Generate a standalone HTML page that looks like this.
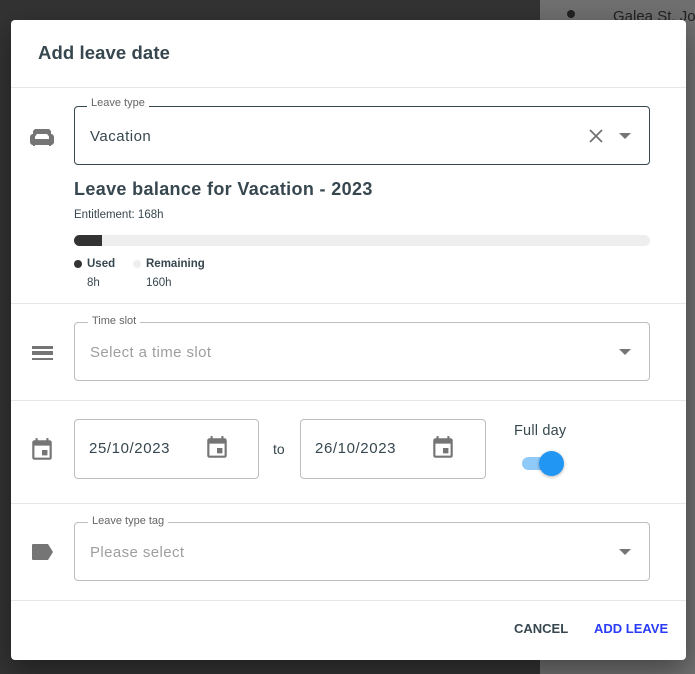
<!DOCTYPE html>
<html><head><style>
*{box-sizing:border-box;margin:0;padding:0}
body{width:695px;height:674px;overflow:hidden;font-family:"Liberation Sans",sans-serif;background:#333;position:relative}
.abs{position:absolute}
.bgr{left:540px;top:0;width:155px;height:674px;background:#707070}
.dlg{left:11px;top:20px;width:675px;height:640px;background:#fff;border-radius:4px;box-shadow:0 10px 30px rgba(0,0,0,.4)}
.hr{left:11px;width:675px;height:1px;background:#e6e6e6}
.fld{border:1px solid #bdbdbd;border-radius:4px;background:#fff}
.lg{font-size:11px;color:#666;background:#fff;padding:0 4px;line-height:12px}
.t{white-space:nowrap}
.ph{font-size:15px;color:#9e9e9e;letter-spacing:.4px}
.arr{width:0;height:0;border-left:6px solid transparent;border-right:6px solid transparent;border-top:6px solid #757575}
</style></head><body>
<div class="abs bgr"></div>
<div class="abs t" style="left:613px;top:8px;font-size:15px;color:#222">Galea St. Jo</div>
<div class="abs" style="left:567px;top:10px;width:8px;height:8px;border-radius:50%;background:#222"></div>
<div class="abs dlg"></div>
<div class="abs t" style="left:38px;top:42px;font-size:18.5px;color:#37474f;font-weight:bold;letter-spacing:.1px">Add leave date</div>
<div class="abs hr" style="top:87px"></div>

<svg class="abs" style="left:29px;top:125px" width="26" height="24" viewBox="0 0 24 24"><path fill="#757575" d="M21 9V7c0-1.65-1.35-3-3-3H6C4.35 4 3 5.35 3 7v2c-1.65 0-3 1.35-3 3v5c0 1.650 1.35 3 3 3v1h2v-1h14v1h2v-1c1.65 0 3-1.35 3-3v-5c0-1.65-1.35-3-3-3zM5 12c0-.9.6-1.6 1.5-1.9V9h11v1.1c.9.3 1.5 1 1.5 1.9v2H5z"/></svg>
<div class="abs fld" style="left:74px;top:106px;width:576px;height:59px;border-color:#37474f"></div>
<div class="abs lg t" style="left:87px;top:97px">Leave type</div>
<div class="abs t" style="left:90px;top:128px;font-size:15px;color:#37474f;letter-spacing:.5px">Vacation</div>
<svg class="abs" style="left:588px;top:128px" width="16" height="16" viewBox="0 0 16 16"><path d="M2 2L14 14M14 2L2 14" stroke="#757575" stroke-width="1.8"/></svg>
<div class="abs arr" style="left:619px;top:133px"></div>

<div class="abs t" style="left:74px;top:179px;font-size:18px;font-weight:bold;color:#37474f;letter-spacing:.35px">Leave balance for Vacation - 2023</div>
<div class="abs t" style="left:74px;top:209px;font-size:11.5px;color:#37474f">Entitlement: 168h</div>
<div class="abs" style="left:74px;top:235px;width:576px;height:11px;border-radius:6px;background:#eee"></div>
<div class="abs" style="left:74px;top:235px;width:28px;height:11px;border-radius:6px 0 0 6px;background:#333"></div>
<div class="abs" style="left:74px;top:260px;width:8px;height:8px;border-radius:50%;background:#333"></div>
<div class="abs t" style="left:87px;top:258px;font-size:11.5px;font-weight:bold;color:#37474f">Used</div>
<div class="abs" style="left:133px;top:260px;width:8px;height:8px;border-radius:50%;background:#eee"></div>
<div class="abs t" style="left:146px;top:258px;font-size:11.5px;font-weight:bold;color:#37474f">Remaining</div>
<div class="abs t" style="left:87px;top:277px;font-size:11.5px;color:#37474f">8h</div>
<div class="abs t" style="left:146px;top:277px;font-size:11.5px;color:#37474f">160h</div>
<div class="abs hr" style="top:303px"></div>

<div class="abs" style="left:32px;top:346px;width:21px;height:3px;background:#757575"></div>
<div class="abs" style="left:32px;top:351px;width:21px;height:4px;background:#757575"></div>
<div class="abs" style="left:32px;top:358px;width:21px;height:2px;background:#757575"></div>
<div class="abs fld" style="left:74px;top:322px;width:576px;height:59px"></div>
<div class="abs lg t" style="left:88px;top:315px">Time slot</div>
<div class="abs t ph" style="left:90px;top:344px">Select a time slot</div>
<div class="abs arr" style="left:619px;top:349px"></div>
<div class="abs hr" style="top:400px"></div>

<svg class="abs" style="left:29px;top:437px" width="26" height="26" viewBox="0 0 24 24"><path fill="#757575" d="M17 12h-5v5h5v-5zM16 1v2H8V1H6v2H5c-1.11 0-2 .9-2 2v14a2 2 0 0 0 2 2h14c1.1 0 2-.9 2-2V5c0-1.1-.9-2-2-2h-1V1h-2zm3 18H5V8h14v11z"/></svg>
<div class="abs fld" style="left:74px;top:419px;width:185px;height:60px"></div>
<div class="abs t" style="left:89px;top:440px;font-size:15px;color:#37474f;letter-spacing:.6px">25/10/2023</div>
<svg class="abs" style="left:204px;top:435px" width="26" height="26" viewBox="0 0 24 24"><path fill="#757575" d="M17 12h-5v5h5v-5zM16 1v2H8V1H6v2H5c-1.11 0-2 .9-2 2v14a2 2 0 0 0 2 2h14c1.1 0 2-.9 2-2V5c0-1.1-.9-2-2-2h-1V1h-2zm3 18H5V8h14v11z"/></svg>
<div class="abs t" style="left:273px;top:441px;font-size:14px;color:#37474f">to</div>
<div class="abs fld" style="left:300px;top:419px;width:186px;height:60px"></div>
<div class="abs t" style="left:315px;top:440px;font-size:15px;color:#37474f;letter-spacing:.6px">26/10/2023</div>
<svg class="abs" style="left:430px;top:435px" width="26" height="26" viewBox="0 0 24 24"><path fill="#757575" d="M17 12h-5v5h5v-5zM16 1v2H8V1H6v2H5c-1.11 0-2 .9-2 2v14a2 2 0 0 0 2 2h14c1.1 0 2-.9 2-2V5c0-1.1-.9-2-2-2h-1V1h-2zm3 18H5V8h14v11z"/></svg>
<div class="abs t" style="left:514px;top:423px;font-size:14.5px;color:#37474f;letter-spacing:.2px">Full day</div>
<div class="abs" style="left:522px;top:457px;width:34px;height:13px;border-radius:7px;background:#90caf9"></div>
<div class="abs" style="left:539px;top:451px;width:25px;height:25px;border-radius:50%;background:#2196f3;box-shadow:0 1px 3px rgba(0,0,0,.3)"></div>
<div class="abs hr" style="top:503px"></div>

<svg class="abs" style="left:31px;top:543px" width="24" height="18" viewBox="0 0 24 18"><path fill="#757575" d="M2 1h15l5 8-5 8H2a1 1 0 0 1-1-1V2a1 1 0 0 1 1-1z"/></svg>
<div class="abs fld" style="left:74px;top:522px;width:576px;height:59px"></div>
<div class="abs lg t" style="left:88px;top:515px">Leave type tag</div>
<div class="abs t ph" style="left:90px;top:544px">Please select</div>
<div class="abs arr" style="left:619px;top:549px"></div>
<div class="abs hr" style="top:600px"></div>

<div class="abs t" style="left:514px;top:621px;font-size:13px;font-weight:bold;color:#37474f;letter-spacing:0">CANCEL</div>
<div class="abs t" style="left:594px;top:621px;font-size:13px;font-weight:bold;color:#2a3cf5;letter-spacing:0">ADD LEAVE</div>
</body></html>
